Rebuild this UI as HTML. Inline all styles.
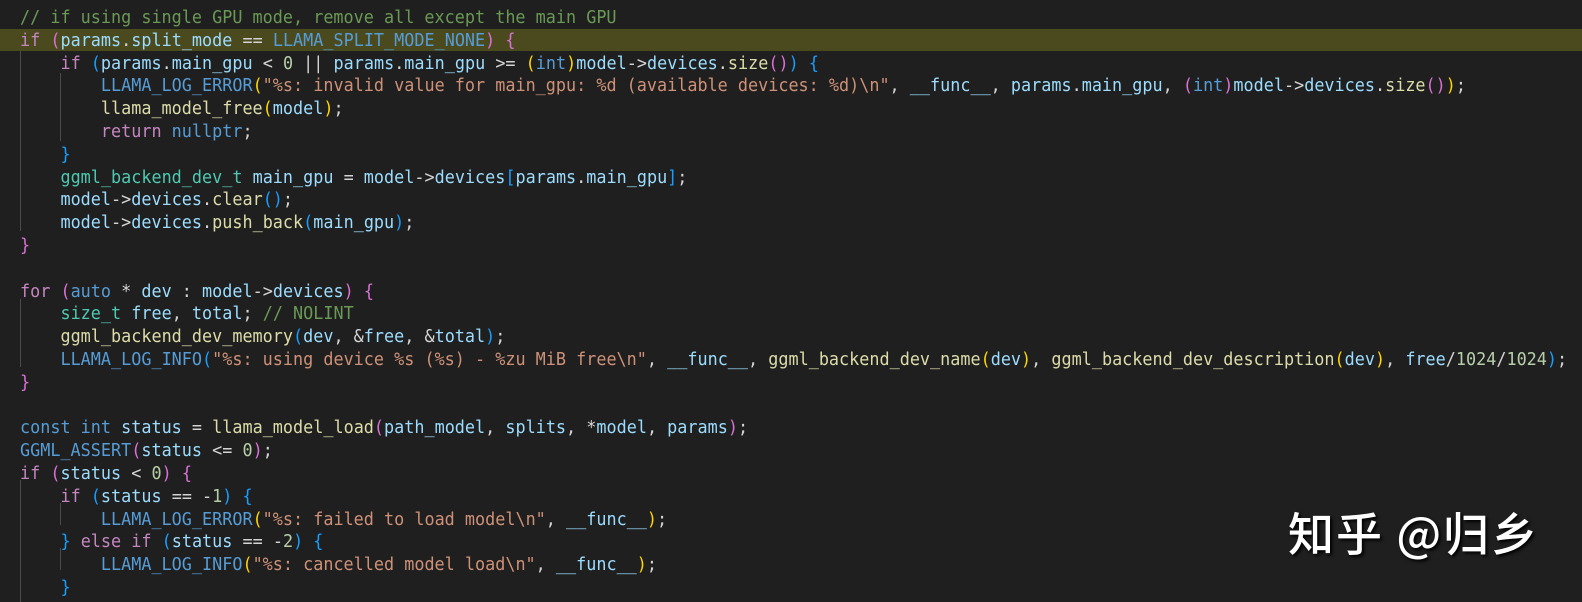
<!DOCTYPE html>
<html><head><meta charset="utf-8"><style>
body{margin:0;width:1582px;height:602px;background:#1f1f1f;overflow:hidden;position:relative}
.hl{position:absolute;left:0;top:29px;width:1582px;height:22px;background:#4b4a1f}
.g{position:absolute;width:1px;background:#4a4a4a}
pre{position:absolute;left:20px;top:7px;margin:0;font-family:"DejaVu Sans Mono","Liberation Mono",monospace;font-size:18px;line-height:22.8px;color:#d4d4d4;transform:scaleX(0.933);transform-origin:0 0;white-space:pre}
.c{color:#6a9955}.k{color:#c586c0}.s{color:#569cd6}.v{color:#9cdcfe}.f{color:#dcdcaa}.t{color:#4ec9b0}.st{color:#ce9178}.n{color:#b5cea8}.m{color:#569cd6}
.p{color:#da70d6}.b{color:#179fff}.y{color:#ffd700}
.wm{position:absolute;left:1288px;top:499px;font-family:"Noto Sans CJK SC","WenQuanYi Zen Hei",sans-serif;font-size:46px;font-weight:500;color:#fff;text-shadow:2px 2px 3px #000;letter-spacing:2px}
</style></head><body>
<div class="hl"></div>
<div class="g" style="left:20px;top:51px;height:180px"></div>
<div class="g" style="left:60px;top:73px;height:68px"></div>
<div class="g" style="left:20px;top:299px;height:68px"></div>
<div class="g" style="left:20px;top:480px;height:122px"></div>
<div class="g" style="left:60px;top:503px;height:22px"></div>
<div class="g" style="left:60px;top:548px;height:22px"></div>
<pre><span class="c">// if using single GPU mode, remove all except the main GPU</span>
<span class="k">if</span> <span class="p">(</span><span class="v">params</span>.<span class="v">split_mode</span> == <span class="m">LLAMA_SPLIT_MODE_NONE</span><span class="p">)</span> <span class="p">{</span>
    <span class="k">if</span> <span class="b">(</span><span class="v">params</span>.<span class="v">main_gpu</span> &lt; <span class="n">0</span> || <span class="v">params</span>.<span class="v">main_gpu</span> &gt;= <span class="y">(</span><span class="s">int</span><span class="y">)</span><span class="v">model</span>-&gt;<span class="v">devices</span>.<span class="f">size</span><span class="p">()</span><span class="b">)</span> <span class="b">{</span>
        <span class="m">LLAMA_LOG_ERROR</span><span class="y">(</span><span class="st">"%s: invalid value for main_gpu: %d (available devices: %d)\n"</span>, <span class="v">__func__</span>, <span class="v">params</span>.<span class="v">main_gpu</span>, <span class="p">(</span><span class="s">int</span><span class="p">)</span><span class="v">model</span>-&gt;<span class="v">devices</span>.<span class="f">size</span><span class="p">()</span><span class="y">)</span>;
        <span class="f">llama_model_free</span><span class="y">(</span><span class="v">model</span><span class="y">)</span>;
        <span class="k">return</span> <span class="s">nullptr</span>;
    <span class="b">}</span>
    <span class="t">ggml_backend_dev_t</span> <span class="v">main_gpu</span> = <span class="v">model</span>-&gt;<span class="v">devices</span><span class="b">[</span><span class="v">params</span>.<span class="v">main_gpu</span><span class="b">]</span>;
    <span class="v">model</span>-&gt;<span class="v">devices</span>.<span class="f">clear</span><span class="b">()</span>;
    <span class="v">model</span>-&gt;<span class="v">devices</span>.<span class="f">push_back</span><span class="b">(</span><span class="v">main_gpu</span><span class="b">)</span>;
<span class="p">}</span>

<span class="k">for</span> <span class="p">(</span><span class="s">auto</span> * <span class="v">dev</span> : <span class="v">model</span>-&gt;<span class="v">devices</span><span class="p">)</span> <span class="p">{</span>
    <span class="t">size_t</span> <span class="v">free</span>, <span class="v">total</span>; <span class="c">// NOLINT</span>
    <span class="f">ggml_backend_dev_memory</span><span class="b">(</span><span class="v">dev</span>, &amp;<span class="v">free</span>, &amp;<span class="v">total</span><span class="b">)</span>;
    <span class="m">LLAMA_LOG_INFO</span><span class="b">(</span><span class="st">"%s: using device %s (%s) - %zu MiB free\n"</span>, <span class="v">__func__</span>, <span class="f">ggml_backend_dev_name</span><span class="y">(</span><span class="v">dev</span><span class="y">)</span>, <span class="f">ggml_backend_dev_description</span><span class="y">(</span><span class="v">dev</span><span class="y">)</span>, <span class="v">free</span>/<span class="n">1024</span>/<span class="n">1024</span><span class="b">)</span>;
<span class="p">}</span>

<span class="s">const</span> <span class="s">int</span> <span class="v">status</span> = <span class="f">llama_model_load</span><span class="p">(</span><span class="v">path_model</span>, <span class="v">splits</span>, *<span class="v">model</span>, <span class="v">params</span><span class="p">)</span>;
<span class="m">GGML_ASSERT</span><span class="p">(</span><span class="v">status</span> &lt;= <span class="n">0</span><span class="p">)</span>;
<span class="k">if</span> <span class="p">(</span><span class="v">status</span> &lt; <span class="n">0</span><span class="p">)</span> <span class="p">{</span>
    <span class="k">if</span> <span class="b">(</span><span class="v">status</span> == -<span class="n">1</span><span class="b">)</span> <span class="b">{</span>
        <span class="m">LLAMA_LOG_ERROR</span><span class="y">(</span><span class="st">"%s: failed to load model\n"</span>, <span class="v">__func__</span><span class="y">)</span>;
    <span class="b">}</span> <span class="k">else</span> <span class="k">if</span> <span class="b">(</span><span class="v">status</span> == -<span class="n">2</span><span class="b">)</span> <span class="b">{</span>
        <span class="m">LLAMA_LOG_INFO</span><span class="y">(</span><span class="st">"%s: cancelled model load\n"</span>, <span class="v">__func__</span><span class="y">)</span>;
    <span class="b">}</span></pre>
<div class="wm">知乎 @归乡</div>
</body></html>
